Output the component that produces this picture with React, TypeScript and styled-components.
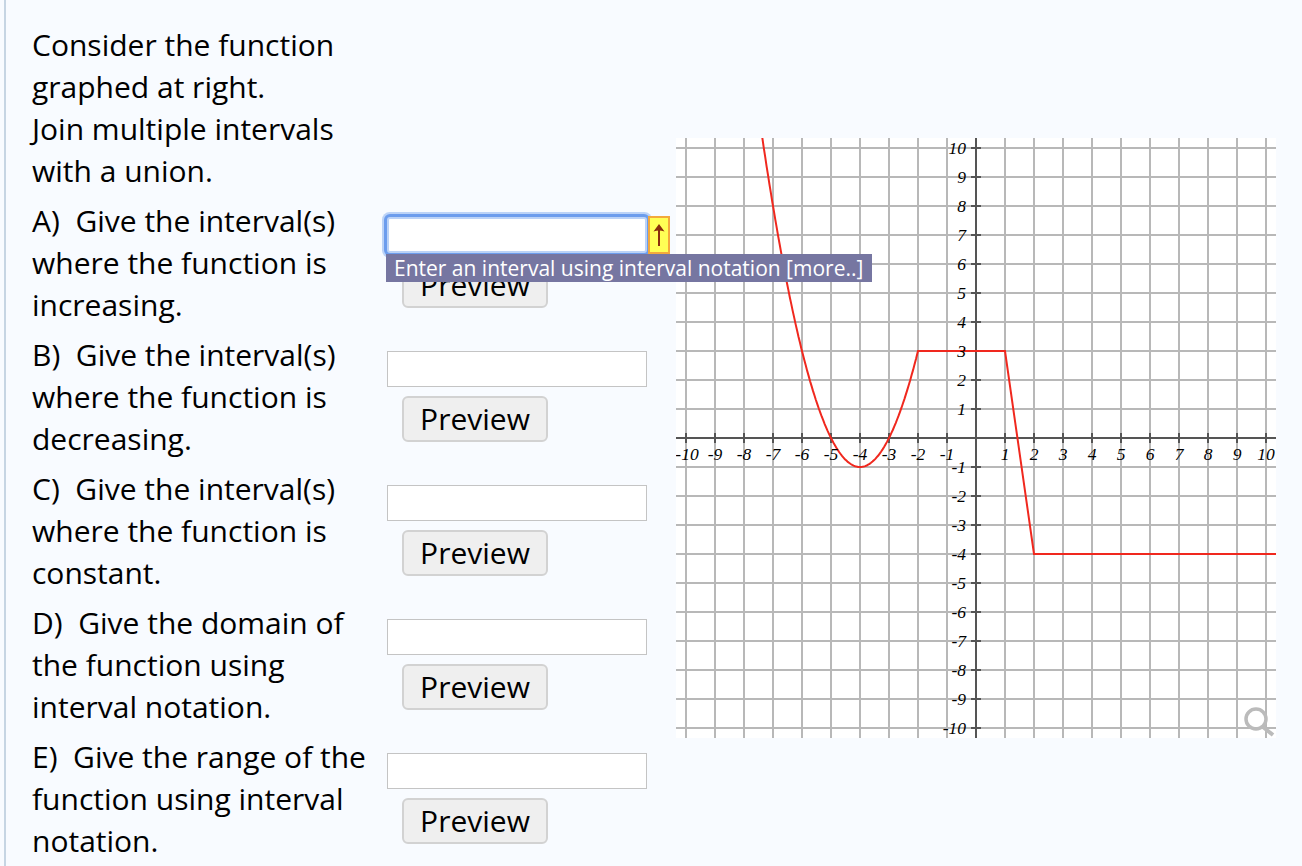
import React from "react";
import styled, { createGlobalStyle } from "styled-components";

const GlobalStyle = createGlobalStyle`
  html, body {
    margin: 0;
    padding: 0;
    background: #f8fbff;
  }
`;

const Page = styled.div`
  box-sizing: border-box;
  display: flex;
  align-items: flex-start;
  height: 866px;
  margin-left: 4px;
  padding: 24px 0 0 26px;
  border-left: 2px solid #c6d5e3;
  overflow: hidden;
  font-family: "Open Sans", sans-serif;
  font-size: 30px;
  line-height: 42px;
  color: #000;
`;

const Questions = styled.div`
  width: 644px;
  flex: none;
  display: flex;
  flex-direction: column;
  gap: 8px;
`;

const Intro = styled.div`
  width: 340px;
`;

const QuestionRow = styled.div`
  display: flex;
  height: 126px;
`;

const QuestionText = styled.div`
  width: 355px;
  flex: none;
  box-sizing: border-box;
`;

const AnswerColumn = styled.div`
  position: relative;
  width: 283px;
  padding-top: 17px;
`;

const InputRow = styled.div`
  display: flex;
  align-items: center;
  height: 36px;
`;

const AnswerInput = styled.div<{ $focused?: boolean }>`
  box-sizing: border-box;
  width: 260px;
  height: 36px;
  flex: none;
  background: #fff;
  border: ${(p) => (p.$focused ? "2px solid #bcd3f7" : "1px solid #c4c4c4")};
  ${(p) => p.$focused && "box-shadow: 0 0 0 3px #6d9ded, 0 0 0 5px #bcd3f7; border-radius: 3px;"}
`;

const HintBadge = styled.div`
  box-sizing: border-box;
  display: flex;
  align-items: center;
  justify-content: center;
  width: 22px;
  height: 38px;
  margin-left: 1px;
  background: #ffff55;
  border: 2px solid #f3a93c;
  position: relative;
  z-index: 1;
`;

const PreviewButton = styled.button`
  display: block;
  box-sizing: border-box;
  width: 146px;
  height: 46px;
  margin: 9px 0 0 15px;
  padding: 0;
  background: #efefef;
  border: 2px solid #d2d2d2;
  border-radius: 6px;
  font-family: inherit;
  font-size: 30px;
  line-height: 40px;
  color: #000;
`;

const Tip = styled.div`
  position: absolute;
  left: -1px;
  top: 54px;
  z-index: 2;
  box-sizing: border-box;
  width: 486px;
  height: 28px;
  padding-left: 8px;
  background: #7676a1;
  color: #fff;
  font-size: 21px;
  line-height: 28px;
  white-space: nowrap;
`;

const GraphBox = styled.div`
  flex: none;
  width: 600px;
  height: 600px;
  margin-top: 114px;
  background: #fff;
  svg {
    display: block;
  }
`;

const questions = [
  { text: "A)\u00a0 Give the interval(s) where the function is increasing.", focused: true },
  { text: "B)\u00a0 Give the interval(s) where the function is decreasing." },
  { text: "C)\u00a0 Give the interval(s) where the function is constant." },
  { text: "D)\u00a0 Give the domain of the function using interval notation." },
  { text: "E)\u00a0 Give the range of the function using interval notation." },
];

const X0 = 300;
const Y0 = 300;
const UNIT = 29;
const px = (x: number) => X0 + x * UNIT;
const py = (y: number) => Y0 - y * UNIT;
const steps = Array.from({ length: 21 }, (_, i) => i - 10);

const curve = () => {
  const pts: string[] = [];
  for (let x = -7.37; x <= -2; x += 0.05) {
    pts.push(`${px(x).toFixed(1)},${py((x + 4) * (x + 4) - 1).toFixed(1)}`);
  }
  pts.push(`${px(-2)},${py(3)}`, `${px(1)},${py(3)}`, `${px(2)},${py(-4)}`, `600,${py(-4)}`);
  return pts.join(" ");
};

const Graph: React.FC = () => (
  <svg width="600" height="600" viewBox="0 0 600 600">
    {steps.map((k) => (
      <g key={k} stroke="#b8b8b8" strokeWidth="2">
        {k !== 0 && <line x1={px(k)} y1="0" x2={px(k)} y2="600" />}
        {k !== 0 && <line x1="0" y1={py(k)} x2="600" y2={py(k)} />}
      </g>
    ))}
    {steps.map((k) =>
      k === 0 ? null : (
        <g key={k} stroke="#555" strokeWidth="2">
          <line x1={px(k)} y1={Y0 - 5} x2={px(k)} y2={Y0 + 5} />
          <line x1={X0 - 5} y1={py(k)} x2={X0 + 5} y2={py(k)} />
        </g>
      )
    )}
    <line x1="0" y1={Y0} x2="600" y2={Y0} stroke="#555" strokeWidth="2" />
    <line x1={X0} y1="0" x2={X0} y2="600" stroke="#555" strokeWidth="2" />
    <polyline points={curve()} fill="none" stroke="#f0281e" strokeWidth="2" />
    <g fontFamily="'Liberation Serif', serif" fontStyle="italic" fontSize="17.5" fill="#000">
      {steps.map((k) =>
        k === 0 ? null : (
          <text key={`x${k}`} x={px(k) + (k === -10 ? 1 : 0)} y={Y0 + 22} textAnchor="middle">
            {k}
          </text>
        )
      )}
      {steps.map((k) =>
        k === 0 ? null : (
          <text key={`y${k}`} x={X0 - 10} y={py(k) + 6} textAnchor="end">
            {k}
          </text>
        )
      )}
    </g>
    <g fill="none" stroke="#bbb">
      <circle cx="580" cy="581" r="10" strokeWidth="3.5" />
      <line x1="587" y1="589" x2="597" y2="597" strokeWidth="4" />
    </g>
  </svg>
);

const App: React.FC = () => (
  <>
    <GlobalStyle />
    <Page>
      <Questions>
        <Intro>
          Consider the function graphed at right.
          <br />
          Join multiple intervals with a union.
        </Intro>
        {questions.map((q) => (
          <QuestionRow key={q.text}>
            <QuestionText>{q.text}</QuestionText>
            <AnswerColumn>
              <InputRow>
                <AnswerInput $focused={q.focused} />
                {q.focused && (
                  <HintBadge>
                    <svg width="12" height="24" viewBox="0 0 12 24">
                      <path d="M6 23V5" fill="none" stroke="#8a2d0c" strokeWidth="2" />
                      <path d="M6 1L11.5 8.5Q6 6.5 0.5 8.5Z" fill="#8a2d0c" />
                    </svg>
                  </HintBadge>
                )}
              </InputRow>
              <PreviewButton>Preview</PreviewButton>
              {q.focused && <Tip>Enter an interval using interval notation [more..]</Tip>}
            </AnswerColumn>
          </QuestionRow>
        ))}
      </Questions>
      <GraphBox>
        <Graph />
      </GraphBox>
    </Page>
  </>
);

export default App;
